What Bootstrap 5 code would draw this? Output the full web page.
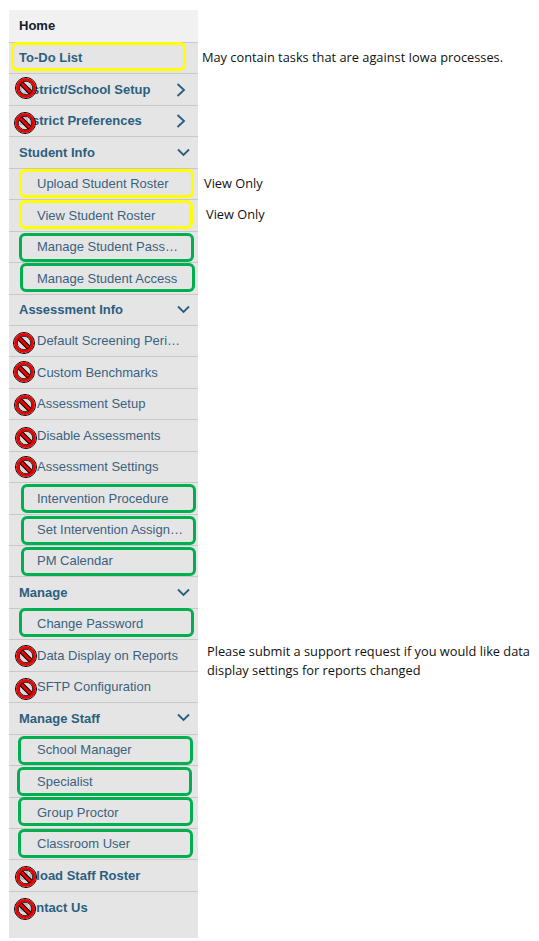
<!DOCTYPE html>
<html lang="en">
<head>
    <meta charset="UTF-8">
    <title>Menu permissions</title>
    <link rel="stylesheet" href="https://cdn.jsdelivr.net/npm/bootstrap@5.3.0/dist/css/bootstrap.min.css">
    <style>
        body {
            background: #fff;
            font-family: "Liberation Sans", Arial, sans-serif;
        }
        .page-wrap { padding: 10px 0 0 9px; }
        .menu-line { height: 31.45px; }
        .menu-line.is-first { height: 33px; }
        .menu-cell {
            width: 189px;
            flex: none;
            height: 100%;
            padding-left: 10px;
            padding-right: 8px;
            background: #e5e5e5;
            border-bottom: 1px solid #c8c8c8;
            font-size: 13px;
            color: #3a6280;
            position: relative;
        }
        .menu-line:nth-last-child(2) .menu-cell { border-bottom: 0; }
        .menu-cell.is-head { font-weight: 700; color: #2b5f80; }
        .menu-cell.is-home { font-weight: 700; color: #14202c; background: #f1f1f1; }
        .menu-cell.is-sub { padding-left: 28px; }
        .menu-label { white-space: nowrap; }
        .menu-end { background: #e5e5e5; width: 189px; height: 15px; }
        .side-note {
            font-family: "Open Sans", sans-serif;
            font-size: 12.8px;
            line-height: 19px;
            color: #111;
            white-space: nowrap;
        }
        .hl-box {
            position: absolute;
            height: 29px;
            border: 3px solid;
            border-radius: 6px;
        }
        .hl-yellow { border-color: #ffff00; }
        .hl-green { border-color: #00b050; }
        .stop-icon { position: absolute; width: 22px; height: 22px; }
        .chev {
            width: 14px;
            height: 14px;
            flex: none;
            margin-left: auto;
            stroke: #2b5f80;
            stroke-width: 1.9;
            fill: none;
        }
    </style>
</head>
<body>
    <div class="page-wrap" id="menu"></div>

    <script>
        // box: [color, left, width, top], stop: [left, top], note: [left offset, bottom pad, html]
        const rows = [
            { c: "is-home", t: "Home" },
            { c: "is-head", t: "To-Do List", box: ["yellow", 2, 175, -1], note: [4, 2, "May contain tasks that are against Iowa processes."] },
            { c: "is-head", t: "District/School Setup", arrow: "r", stop: [6, 2.5] },
            { c: "is-head", t: "District Preferences", arrow: "r", stop: [5, 6] },
            { c: "is-head", t: "Student Info", arrow: "d" },
            { c: "is-sub", t: "Upload Student Roster", box: ["yellow", 10, 175, 0], note: [6, 2, "View Only"] },
            { c: "is-sub", t: "View Student Roster", box: ["yellow", 10, 174, 0], note: [8, 2, "View Only"] },
            { c: "is-sub", t: "Manage Student Pass…", box: ["green", 10, 175, 1] },
            { c: "is-sub", t: "Manage Student Access", box: ["green", 11, 175, 0] },
            { c: "is-head", t: "Assessment Info", arrow: "d" },
            { c: "is-sub", t: "Default Screening Peri…", stop: [4, 6] },
            { c: "is-sub", t: "Custom Benchmarks", stop: [4, 3.5] },
            { c: "is-sub", t: "Assessment Setup", stop: [5, 5] },
            { c: "is-sub", t: "Disable Assessments", stop: [6, 6.6] },
            { c: "is-sub", t: "Assessment Settings", stop: [6, 4] },
            { c: "is-sub", t: "Intervention Procedure", box: ["green", 12, 175, 1] },
            { c: "is-sub", t: "Set Intervention Assign…", box: ["green", 12, 175, 1] },
            { c: "is-sub", t: "PM Calendar", box: ["green", 12, 175, 1] },
            { c: "is-head", t: "Manage", arrow: "d" },
            { c: "is-sub", t: "Change Password", box: ["green", 10, 175, -1] },
            { c: "is-sub", t: "Data Display on Reports", stop: [6, 4.5], note: [9, -10, "Please submit a support request if you would like data<br>display settings for reports changed"] },
            { c: "is-sub", t: "SFTP Configuration", stop: [6, 6] },
            { c: "is-head", t: "Manage Staff", arrow: "d" },
            { c: "is-sub", t: "School Manager", box: ["green", 9, 175, 1] },
            { c: "is-sub", t: "Specialist", box: ["green", 8, 175, 1] },
            { c: "is-sub", t: "Group Proctor", box: ["green", 9, 175, -1] },
            { c: "is-sub", t: "Classroom User", box: ["green", 9, 175, 0] },
            { c: "is-head", t: "Upload Staff Roster", stop: [6, 5.3] },
            { c: "is-head", t: "Contact Us", stop: [5, 6] }
        ];

        const stopSvg = `<circle cx="11" cy="11" r="7" fill="#d8d8d8" fill-opacity=".75"/>
            <path d="M5.500 5.500L16.500 16.500" stroke="#000" stroke-width="5"/>
            <path d="M5 5L17 17" stroke="#f00000" stroke-width="3"/>
            <circle cx="11" cy="11" r="10.500" fill="none" stroke="#000" stroke-width="1"/>
            <circle cx="11" cy="11" r="8.500" fill="none" stroke="#f00000" stroke-width="3"/>
            <circle cx="11" cy="11" r="6.700" fill="none" stroke="#000" stroke-width=".8"/>`;

        let html = "";
        rows.forEach((r, i) => {
            let extra = "";
            if (r.arrow === "r") extra = `<svg class="chev" viewBox="0 0 14 14"><path d="M1.500 1L8 7L1.500 13"/></svg>`;
            if (r.arrow === "d") extra = `<svg class="chev" viewBox="0 0 14 14"><path d="M2 3.500L7.500 9L13 3.500"/></svg>`;
            let over = "";
            if (r.box) over += `<div class="hl-box hl-${r.box[0]}" style="left:${r.box[1]}px;width:${r.box[2]}px;top:${r.box[3]}px"></div>`;
            if (r.stop) over += `<svg class="stop-icon" viewBox="0 0 22 22" style="left:${r.stop[0]}px;top:${r.stop[1]}px">${stopSvg}</svg>`;
            let note = r.note ? `<div class="side-note" style="margin-left:${r.note[0]}px;margin-bottom:${r.note[1]}px">${r.note[2]}</div>` : "";
            html += `<div class="menu-line d-flex align-items-center ${i === 0 ? "is-first" : ""}">
                <div class="menu-cell d-flex align-items-center ${r.c}"><span class="menu-label">${r.t}</span>${extra}${over}</div>${note}
            </div>`;
        });
        html += `<div class="menu-end"></div>`;
        document.getElementById("menu").innerHTML = html;
    </script>
    <script src="https://cdn.jsdelivr.net/npm/bootstrap@5.3.0/dist/js/bootstrap.bundle.min.js"></script>
</body>
</html>
